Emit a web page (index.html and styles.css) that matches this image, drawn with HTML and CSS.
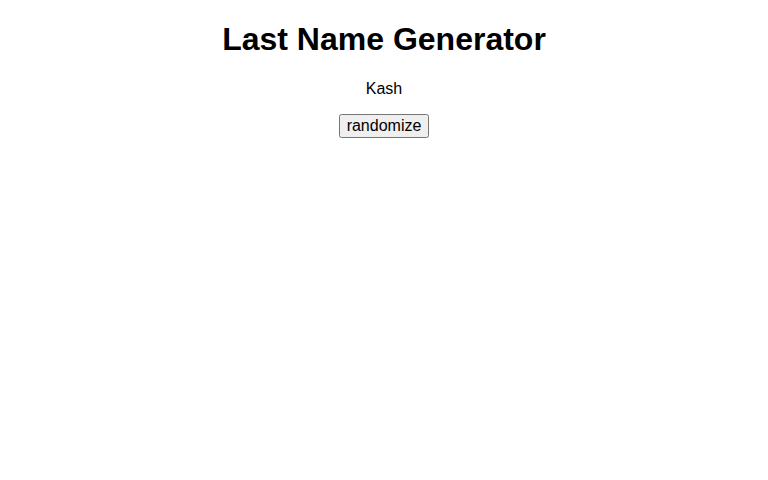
FILE: index.html
```html
<!DOCTYPE html>
<html>
<head>
    <title>Last Name Generator</title>
    <link rel="stylesheet" href="styles.css">
</head>
<body>
    <div class="generator">
        <h1>Last Name Generator</h1>
        <p id="name">Kash</p>
        <button onclick="randomize()">randomize</button>
    </div>
    <script>
        const names = ["Kash", "Smith", "Garcia", "Nguyen", "Patel", "Okafor", "Larsen", "Moreau"];
        function randomize() {
            const pick = names[Math.floor(Math.random() * names.length)];
            document.getElementById("name").textContent = pick;
        }
    </script>
</body>
</html>
```

FILE: styles.css
```css
body {
    margin: 0;
    font-family: "Liberation Sans", Arial, sans-serif;
}

.generator {
    text-align: center;
}

button {
    font-family: inherit;
    font-size: 16px;
}
```
